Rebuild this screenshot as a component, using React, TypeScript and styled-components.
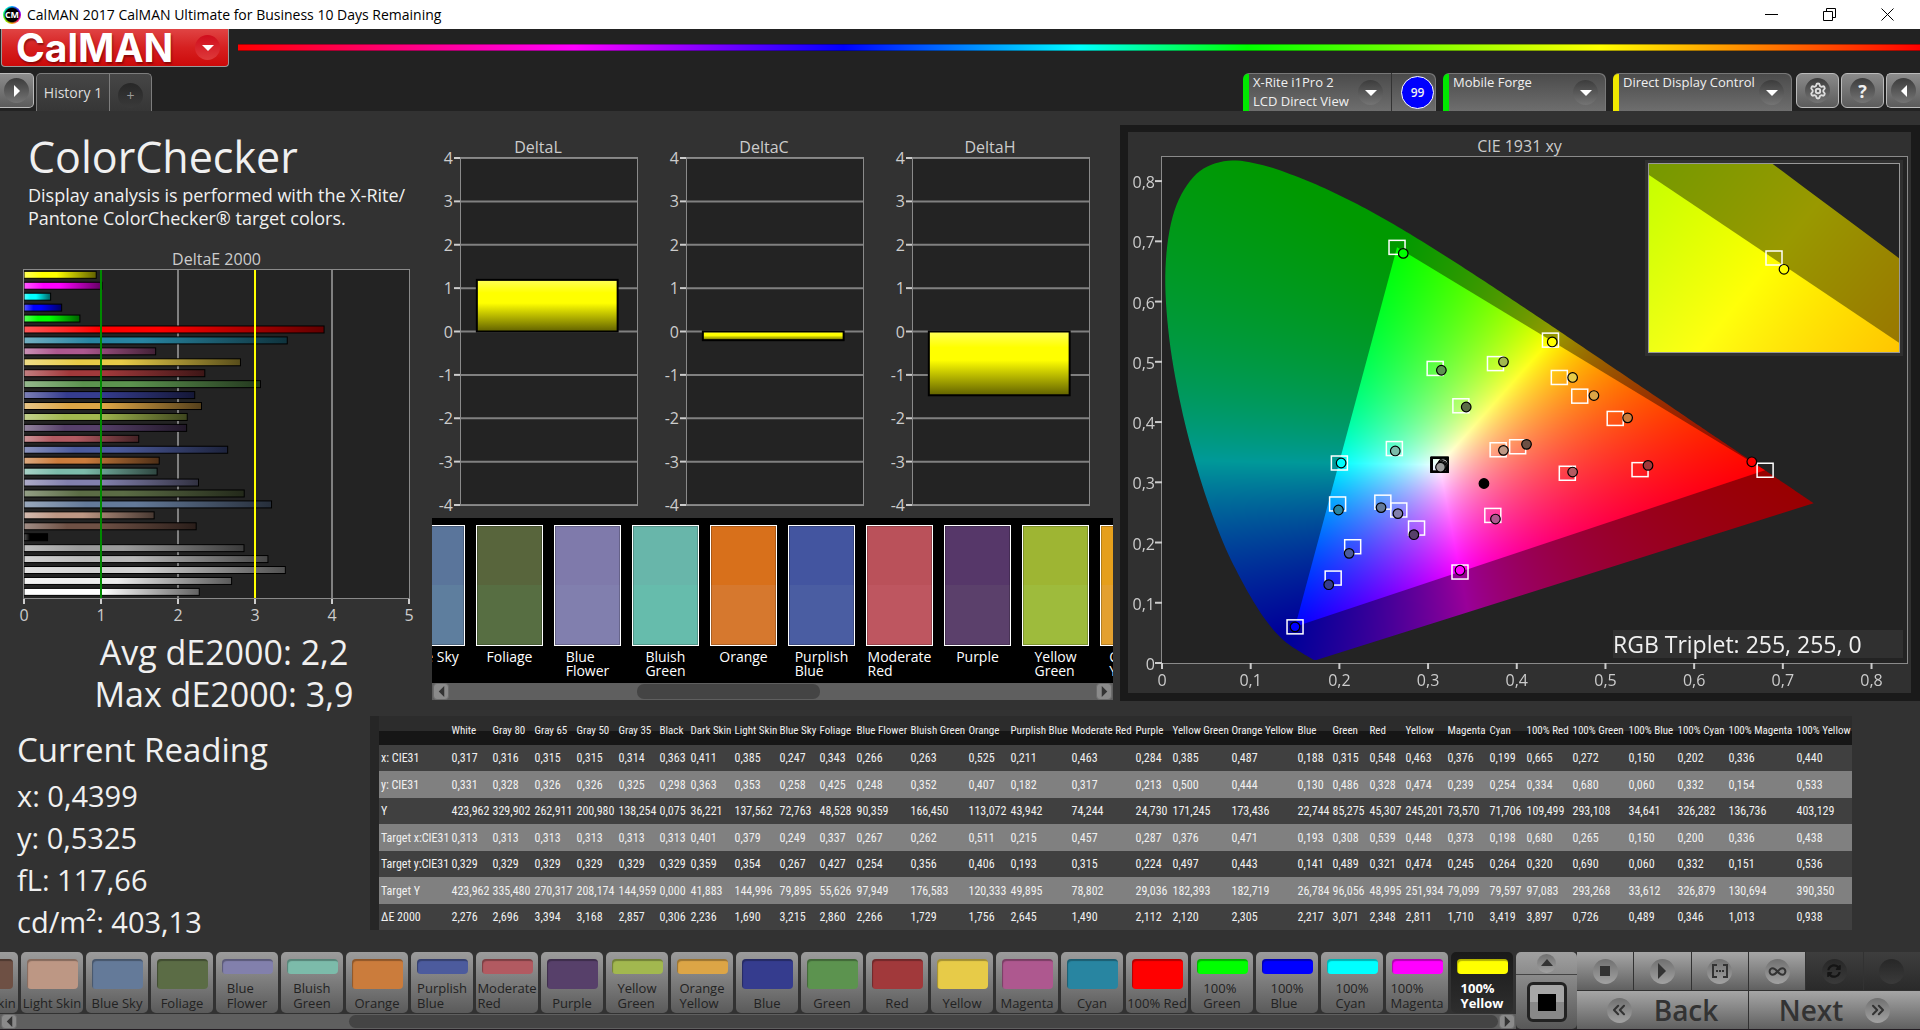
import React, { useId, useLayoutEffect, useRef } from "react";
import styled, { createGlobalStyle, css } from "styled-components";
import { ChevronsLeft, ChevronsRight, Infinity as InfinityIcon, Settings } from "lucide-react";
import { FaSyncAlt } from "react-icons/fa";

/* ---------- data ---------- */

type Patch = {
  name: string;
  lines?: string[];
  color: string;
  values: string[];
};

const rowLabels = ["x: CIE31", "y: CIE31", "Y", "Target x:CIE31", "Target y:CIE31", "Target Y", "ΔE 2000"];

const patch = (name: string, color: string, values: string, lines?: string[]): Patch => ({
  name,
  color,
  values: values.split(" "),
  lines,
});

const patches: Patch[] = [
  patch("White", "#ffffff", "0,317 0,331 423,962 0,313 0,329 423,962 2,276"),
  patch("Gray 80", "#ececec", "0,316 0,328 329,902 0,313 0,329 335,480 2,696"),
  patch("Gray 65", "#d2d2d2", "0,315 0,326 262,911 0,313 0,329 270,317 3,394"),
  patch("Gray 50", "#b9b9b9", "0,315 0,326 200,980 0,313 0,329 208,174 3,168"),
  patch("Gray 35", "#9b9b9b", "0,314 0,325 138,254 0,313 0,329 144,959 2,857"),
  patch("Black", "#000000", "0,363 0,298 0,075 0,313 0,329 0,000 0,306"),
  patch("Dark Skin", "#6e5044", "0,411 0,363 36,221 0,401 0,359 41,883 2,236"),
  patch("Light Skin", "#bd9784", "0,385 0,353 137,562 0,379 0,354 144,996 1,690"),
  patch("Blue Sky", "#647a99", "0,247 0,258 72,763 0,249 0,267 79,895 3,215"),
  patch("Foliage", "#5b6c45", "0,343 0,425 48,528 0,337 0,427 55,626 2,860"),
  patch("Blue Flower", "#8280ac", "0,266 0,248 90,359 0,267 0,254 97,949 2,266", ["Blue", "Flower"]),
  patch("Bluish Green", "#7cbbaa", "0,263 0,352 166,450 0,262 0,356 176,583 1,729", ["Bluish", "Green"]),
  patch("Orange", "#cb7c3c", "0,525 0,407 113,072 0,511 0,406 120,333 1,756"),
  patch("Purplish Blue", "#4c5b9d", "0,211 0,182 43,942 0,215 0,193 49,895 2,645", ["Purplish", "Blue"]),
  patch("Moderate Red", "#b25a61", "0,463 0,317 74,244 0,457 0,315 78,802 1,490", ["Moderate", "Red"]),
  patch("Purple", "#57406a", "0,284 0,213 24,730 0,287 0,224 29,036 2,112"),
  patch("Yellow Green", "#a2b84f", "0,385 0,500 171,245 0,376 0,497 182,393 2,120", ["Yellow", "Green"]),
  patch("Orange Yellow", "#dca546", "0,487 0,444 173,436 0,471 0,443 182,719 2,305", ["Orange", "Yellow"]),
  patch("Blue", "#353c8e", "0,188 0,130 22,744 0,193 0,141 26,784 2,217"),
  patch("Green", "#5c934f", "0,315 0,486 85,275 0,308 0,489 96,056 3,071"),
  patch("Red", "#a1393b", "0,548 0,328 45,307 0,539 0,321 48,995 2,348"),
  patch("Yellow", "#e7cb48", "0,463 0,474 245,201 0,448 0,474 251,934 2,811"),
  patch("Magenta", "#ae588f", "0,376 0,239 73,570 0,373 0,245 79,099 1,710"),
  patch("Cyan", "#2885a1", "0,199 0,254 71,706 0,198 0,264 79,597 3,419"),
  patch("100% Red", "#ff0000", "0,665 0,334 109,499 0,680 0,320 97,083 3,897"),
  patch("100% Green", "#00ff00", "0,272 0,680 293,108 0,265 0,690 293,268 0,726", ["100%", "Green"]),
  patch("100% Blue", "#0000ff", "0,150 0,060 34,641 0,150 0,060 33,612 0,489", ["100%", "Blue"]),
  patch("100% Cyan", "#00ffff", "0,202 0,332 326,282 0,200 0,332 326,879 0,346", ["100%", "Cyan"]),
  patch("100% Magenta", "#ff00ff", "0,336 0,154 136,736 0,336 0,151 130,694 1,013", ["100%", "Magenta"]),
  patch("100% Yellow", "#ffff00", "0,440 0,533 403,129 0,438 0,536 390,350 0,938", ["100%", "Yellow"]),
];

const columnWidths = [
  41, 42, 42, 42, 41, 31, 44, 45, 40, 37, 54, 58, 42, 61, 64, 37, 59, 66, 35, 37, 36, 42, 42, 37, 46, 56, 49, 51, 68, 57,
];

const swatches = [
  { lines: ["Blue Sky"], top: "#5a759b", bottom: "#5e7e9e" },
  { lines: ["Foliage"], top: "#58653c", bottom: "#576e42" },
  { lines: ["Blue", "Flower"], top: "#7f7aab", bottom: "#817fae" },
  { lines: ["Bluish", "Green"], top: "#68b6aa", bottom: "#66bcac" },
  { lines: ["Orange"], top: "#d8701b", bottom: "#d6782e" },
  { lines: ["Purplish", "Blue"], top: "#4355a0", bottom: "#4a5da2" },
  { lines: ["Moderate", "Red"], top: "#ba515a", bottom: "#be5660" },
  { lines: ["Purple"], top: "#563769", bottom: "#5b406b" },
  { lines: ["Yellow", "Green"], top: "#9eb533", bottom: "#9ebb3c" },
  { lines: ["Orange", "Yellow"], top: "#e59f1c", bottom: "#e3a02f" },
];

const num = (text: string) => parseFloat(text.replace(",", "."));

/* ---------- shared styles ---------- */

const GlobalStyle = createGlobalStyle`
  *, *::before, *::after { box-sizing: border-box; }
  body { margin: 0; background: #323232; }
  button { font: inherit; color: inherit; border: 0; margin: 0; padding: 0; background: none; }
  h1, h2, h3, p { margin: 0; font-weight: 400; }
`;

const sans = `"Open Sans", "Noto Sans", sans-serif`;

const Window = styled.div`
  min-height: 100vh;
  display: flex;
  flex-direction: column;
  overflow: hidden;
  font-family: ${sans};
  color: #f0f0f0;
  background: #323232;
`;

/* ---------- title bar ---------- */

const TitleBar = styled.header`
  height: 29px;
  display: flex;
  align-items: center;
  padding-left: 3px;
  background: #fff;
  color: #000;
  font-size: 14px;
`;

const AppIcon = styled.span`
  width: 18px;
  height: 18px;
  border-radius: 50%;
  display: grid;
  place-items: center;
  background: radial-gradient(circle, #000 52%, transparent 64%), conic-gradient(#0af, #50f, #f0a, #fa0, #6f0, #0fa, #0af);
  color: #fff;
  font-size: 9px;
  font-weight: 700;
`;

const WindowTitle = styled.span`
  flex: 1;
  padding-left: 6px;
`;

const WindowButton = styled.button`
  width: 58px;
  height: 29px;
  display: grid;
  place-items: center;
`;

const WindowButtons = styled.div`
  display: flex;
  padding-right: 4px;
`;

/* ---------- application header ---------- */

const AppHeader = styled.div`
  height: 82px;
  background: #222;
  display: flex;
  flex-direction: column;
  justify-content: space-between;
`;

const BrandRow = styled.div`
  display: flex;
  align-items: flex-start;
  gap: 9px;
  padding-left: 1px;
`;

const BrandButton = styled.button`
  width: 228px;
  height: 38px;
  padding: 0 8px 0 14px;
  display: flex;
  align-items: center;
  justify-content: space-between;
  border: 1px solid #999;
  border-top: 0;
  border-radius: 0 0 4px 4px;
  background: linear-gradient(#e04444, #d62020 50%, #cc0a0a);
  color: #fff;
  font-family: Inter, ${sans};
  font-size: 39px;
  line-height: 36px;
  font-weight: 700;
  text-shadow: 1px 2px 2px rgba(90, 0, 0, 0.6);
`;

const Knob = styled.span<{ $tone?: "red" | "dark" | "light" | "faint" }>`
  width: 25px;
  height: 25px;
  flex: none;
  border-radius: 50%;
  display: grid;
  place-items: center;
  ${({ $tone = "dark" }) =>
    ({
      red: css`background: linear-gradient(#d00c1c, #dd3a3a);`,
      dark: css`background: linear-gradient(#3c3c3c, #747474);`,
      light: css`background: linear-gradient(#707070, #a2a2a2);`,
      faint: css`background: linear-gradient(#272727, #3a3a3a);`,
    })[$tone]}
`;

const Spectrum = styled.div`
  flex: 1;
  height: 7px;
  margin-top: 15px;
  background: linear-gradient(90deg, #f00, #f0f 20%, #00f 36%, #0ff 50%, #0f0 60%, #ff0 81%, #f00);
  border-top: 1px solid rgba(0, 0, 0, 0.35);
  border-bottom: 1px solid rgba(0, 0, 0, 0.35);
`;

const TabRow = styled.div`
  height: 38px;
  display: flex;
  align-items: flex-start;
`;

const EdgeButton = styled.button<{ $side: "left" | "right" }>`
  width: 34px;
  height: 35px;
  display: grid;
  place-items: center;
  border: 1px solid #bbb;
  background: linear-gradient(#8c8c8c, #5c5c5c);
  ${({ $side }) => ($side === "left" ? css`border-left: 0; border-radius: 0 5px 5px 0;` : css`border-right: 0; border-radius: 5px 0 0 5px;`)}
`;

const HistoryTabs = styled.div`
  display: flex;
  margin-left: 2px;
  height: 38px;
  border: 1px solid #7d7d7d;
  border-bottom: 0;
  border-radius: 5px 5px 0 0;
  background: linear-gradient(#464646, #363636);
  color: #ddd;
  font-size: 14px;
`;

const HistoryTab = styled.button`
  width: 73px;
  border-right: 1px solid #7d7d7d;
`;

const AddTab = styled.button`
  width: 41px;
  padding-top: 6px;
  display: grid;
  place-items: center;
  color: #999;
`;

const Spacer = styled.div`
  flex: 1;
`;

const DeviceRow = styled.div`
  display: flex;
  gap: 7px;
`;

const DeviceTab = styled.div<{ $width: number; $accent: string }>`
  width: ${({ $width }) => $width}px;
  height: 38px;
  display: flex;
  overflow: hidden;
  border-radius: 6px 6px 0 0;
  box-shadow: inset -1px 1px 0 #777;
  background: linear-gradient(90deg, ${({ $accent }) => $accent} 6px, transparent 6px), linear-gradient(#4a4a4a, #6e6e6e);
`;

const DeviceButton = styled.button`
  flex: 1;
  display: flex;
  justify-content: space-between;
  padding: 0 8px 0 10px;
  text-align: left;
  font-size: 13px;
  line-height: 19px;
  white-space: nowrap;

  ${Knob} {
    margin-top: 7px;
  }
`;

const MeterBadgeButton = styled.button`
  width: 45px;
  padding-left: 7px;
  border-left: 1px solid #333;
  display: grid;
  place-items: center;
`;

const MeterBadge = styled.span`
  width: 33px;
  height: 33px;
  border: 1px solid #fff;
  border-radius: 50%;
  background: #0000fe;
  display: grid;
  place-items: center;
  font-size: 12px;
  font-weight: 600;
`;

const ToolRow = styled.div`
  display: flex;
  gap: 2px;
  margin-left: 4px;
`;

const ToolButton = styled.button`
  width: 43px;
  height: 35px;
  display: grid;
  place-items: center;
  border: 1px solid #bbb;
  border-radius: 6px;
  background: linear-gradient(#8a8a8a, #5c5c5c);
  font-size: 18px;
  font-weight: 700;
`;

/* ---------- main area ---------- */

const Workspace = styled.main`
  flex: 1;
  background: #323232;
`;

const Analysis = styled.div`
  display: grid;
  grid-template-columns: 432px minmax(0, 681fr) 7px minmax(0, 800fr);
`;

const Summary = styled.section`
  padding: 19px 0 0 24px;
`;

const PageTitle = styled.h1`
  padding-left: 4px;
  font-size: 43px;
  line-height: 54px;
`;

const Description = styled.p`
  padding-left: 4px;
  font-size: 18px;
  line-height: 23px;
  white-space: nowrap;
`;

const ChartTitle = styled.h3`
  font-size: 16px;
  line-height: 22px;
  color: #ccc;
  text-align: center;
`;

const DeltaEBlock = styled.div`
  width: 385px;
  padding-top: 18px;
`;

const Plot = styled.svg<{ $height: number }>`
  display: block;
  width: 100%;
  height: ${({ $height }) => $height}px;
  overflow: visible;
  background: #232323;
  outline: 1px solid #8a8a8a;
  font-size: 16px;
  font-family: ${sans};
`;

const Averages = styled.div`
  margin-top: 33px;
  width: 400px;
  text-align: center;
  font-size: 34px;
  line-height: 42px;
`;

const Middle = styled.section`
  padding-top: 25px;
`;

const DeltaRow = styled.div`
  display: grid;
  grid-template-columns: repeat(3, minmax(0, 1fr));
  column-gap: 50px;
  padding: 0 24px 0 29px;
`;

const DeltaTitle = styled(ChartTitle)`
  padding-right: 22px;
`;

const Carousel = styled.div`
  margin-top: 13px;
  height: 165px;
  overflow: hidden;
  background: #000;
`;

const CarouselTrack = styled.div`
  display: flex;
  gap: 11px;
  margin-left: -34px;
  padding-top: 7px;
`;

const SwatchCard = styled.div`
  flex: 0 0 67px;
  display: flex;
  flex-direction: column;
  align-items: center;
  font-size: 14px;
  line-height: 14px;
  color: #fff;
  white-space: nowrap;
`;

const Swatch = styled.div<{ $top: string; $bottom: string }>`
  width: 67px;
  height: 121px;
  margin-bottom: 4px;
  border: 1px solid #fff;
  background: linear-gradient(${({ $top }) => $top} 50%, ${({ $bottom }) => $bottom} 50%);
  box-shadow: inset 0 0 0 1px rgba(0, 0, 0, 0.2);
`;

const ScrollBar = styled.div<{ $height: number }>`
  height: ${({ $height }) => $height}px;
  display: flex;
  align-items: center;
  padding: 0 1px;
  background: #5f5f5f;
`;

const ScrollArrow = styled.button`
  width: 16px;
  height: 100%;
  display: grid;
  place-items: center;
  border: 1px solid #6c6c6c;
  border-radius: 4px;
  background: #8a8a8a;
`;

const ScrollTrack = styled.div`
  flex: 1;
  height: 100%;
  display: flex;
  padding: 1px 0;
`;

const ScrollThumb = styled.div<{ $size: number }>`
  flex: ${({ $size }) => $size};
  border-radius: 7px;
  background: #444;
`;

const ScrollGap = styled.div<{ $size: number }>`
  flex: ${({ $size }) => $size};
`;

const CiePanel = styled.section`
  grid-column: 4;
  margin-top: 14px;
  height: 576px;
  padding: 7px 9px 8px 8px;
  background: #1a1a1a;
`;

const CieInner = styled.div`
  height: 100%;
  padding: 3px 4px 0 34px;
  background: #303030;
`;

const CieTitle = styled(ChartTitle)`
  padding-right: 30px;
`;

const CiePlot = styled.div`
  position: relative;
  height: 506px;
  background: #232323;
  outline: 1px solid #8a8a8a;
`;

const GamutCanvas = styled.canvas`
  display: block;
  width: 100%;
  height: 100%;
`;

const CieOverlay = styled.svg`
  position: absolute;
  inset: 0;
  width: 100%;
  height: 100%;
  overflow: visible;
  font-size: 16px;
  font-family: ${sans};
`;

const Inset = styled.div`
  position: absolute;
  top: 3px;
  right: 4px;
  width: 258px;
  height: 196px;
  padding: 3px;
  background: #303030;
`;

const InsetPlot = styled.div`
  position: relative;
  height: 100%;
  border: 1px solid #999;
  background: #232323;
`;

const Triplet = styled.div`
  position: absolute;
  right: 4px;
  bottom: 5px;
  width: 290px;
  height: 28px;
  background: #303030;
  font-size: 23px;
  line-height: 28px;
`;

/* ---------- readings and table ---------- */

const Results = styled.div`
  display: grid;
  grid-template-columns: 370px minmax(0, 1fr);
  padding: 1px 69px 9px 0;
`;

const Readings = styled.section`
  padding: 13px 0 0 17px;
`;

const ReadingTitle = styled.h2`
  font-size: 33px;
  line-height: 42px;
  margin-bottom: 4px;
`;

const ReadingLine = styled.p`
  font-size: 29px;
  line-height: 42px;
`;

const DataTable = styled.table`
  width: 100%;
  table-layout: fixed;
  border-collapse: collapse;
  border-left: 9px solid #262626;
  font-family: "Roboto Condensed", "Liberation Sans Narrow", sans-serif;
  font-size: 12px;
  align-self: start;

  th, td {
    padding: 0 0 0 2px;
    text-align: left;
    font-weight: 400;
    white-space: nowrap;
  }

  thead tr {
    height: 29px;
    background: linear-gradient(#2c2c2c 50%, #161616 50%);
  }

  thead th {
    font-size: 11px;
  }

  tbody tr {
    height: 26px;
    background: #404040;
  }

  tbody tr:nth-child(even) {
    height: 27px;
    background: #808080;
  }
`;

/* ---------- footer ---------- */

const Footer = styled.footer`
  height: 78px;
  display: flex;
  border-bottom: 1px solid #221c22;
`;

const PatchArea = styled.div`
  flex: 1;
  min-width: 0;
  display: flex;
  flex-direction: column;
`;

const PatchStrip = styled.div`
  display: flex;
  justify-content: flex-end;
  gap: 3px;
  height: 62px;
  padding-right: 3px;
  overflow: hidden;
`;

const PatchButton = styled.button<{ $active: boolean }>`
  flex: 0 0 62px;
  height: 61px;
  padding: 7px 0 2px;
  display: flex;
  flex-direction: column;
  justify-content: space-between;
  align-items: center;
  border-radius: 5px;
  color: #222;
  font-size: 13px;
  font-weight: 500;
  line-height: 15px;
  white-space: nowrap;
  background: linear-gradient(#9c9c9c, #5a5a5a);
  ${({ $active }) =>
    $active &&
    css`
      color: #fff;
      font-weight: 700;
      background: linear-gradient(#1a1a1a, #2e2e2e);
    `}
`;

const PatchChip = styled.span<{ $color: string; $tall: boolean }>`
  width: 51px;
  height: ${({ $tall }) => ($tall ? 30 : 15)}px;
  border-radius: 4px;
  background: ${({ $color }) => $color};
  box-shadow: inset 1px 2px 1px rgba(0, 0, 0, 0.3);
`;

const PatchLabel = styled.span`
  text-align: left;
`;

const LevelColumn = styled.div`
  width: 61px;
  display: flex;
  flex-direction: column;
  border-radius: 5px;
  overflow: hidden;
  background: linear-gradient(#a0a0a0, #585858);
`;

const UpButton = styled.button`
  height: 23px;
  display: grid;
  place-items: center;
  border-bottom: 1px solid #444;

  ${Knob} {
    width: 19px;
    height: 19px;
  }
`;

const WindowPattern = styled.button`
  flex: 1;
  display: grid;
  place-items: center;
`;

const PatternIcon = styled.span`
  width: 40px;
  height: 40px;
  border: 3px solid #222;
  border-radius: 6px;
  display: grid;
  place-items: center;
  background: linear-gradient(#a6a6a6 50%, #888 50%);

  &::after {
    content: "";
    width: 18px;
    height: 17px;
    background: #000;
  }
`;

const Transport = styled.div`
  width: 343px;
  display: grid;
  grid-template-columns: repeat(6, 1fr);
  grid-template-rows: 38px 38px;
  gap: 1px;
`;

const TransportButton = styled.button<{ $off?: boolean }>`
  display: grid;
  place-items: center;
  color: #333;
  background: linear-gradient(#a6a6a6, #606060);
  ${({ $off }) => $off && css`background: linear-gradient(#3e3e3e, #2a2a2a);color: #151515;`}
`;

const NavButton = styled.button`
  grid-column: span 3;
  display: flex;
  align-items: center;
  justify-content: center;
  gap: 22px;
  color: #333;
  background: linear-gradient(#a6a6a6, #606060);
  font-size: 28px;
  font-weight: 600;
  line-height: 36px;
`;

/* ---------- drawings ---------- */

const Arrow = ({ dir, color = "#fff", size = 12 }: { dir: "up" | "down" | "left" | "right"; color?: string; size?: number }) => {
  const points = {
    up: "0,9 6,2 12,9",
    down: "0,3 12,3 6,9",
    left: "9,0 3,6 9,12",
    right: "3,0 9,6 3,12",
  }[dir];
  return (
    <svg width={size} height={size} viewBox="0 0 12 12" aria-hidden="true">
      <polygon points={points} fill={color} />
    </svg>
  );
};

const channels = (hex: string) => [1, 3, 5].map((i) => parseInt(hex.slice(i, i + 2), 16));
const lighten = (hex: string, t: number) => `rgb(${channels(hex).map((c) => Math.round(c + (255 - c) * t)).join()})`;
const darken = (hex: string, t: number) => `rgb(${channels(hex).map((c) => Math.round(c * t)).join()})`;

const Glossy = ({ id, color, vertical }: { id: string; color: string; vertical?: boolean }) => (
  <linearGradient id={id} x1="0" y1="0" x2={vertical ? 0 : 1} y2={vertical ? 1 : 0}>
    <stop offset="0" stopColor={lighten(color, 0.35)} />
    <stop offset="0.25" stopColor={color} />
    <stop offset="0.45" stopColor={color} />
    <stop offset="1" stopColor={darken(color, 0.38)} />
  </linearGradient>
);

const DeltaEChart = () => {
  const bars = [...patches].reverse();
  const uid = useId();
  return (
    <Plot $height={328} role="img" aria-label="DeltaE 2000">
      <defs>
        {bars.map((bar, i) => (
          <Glossy key={bar.name} id={`${uid}-${i}`} color={bar.color} />
        ))}
      </defs>
      {[1, 2, 3, 4].map((v) => (
        <line key={v} x1={`${v * 20}%`} x2={`${v * 20}%`} y1="0" y2="100%" stroke="#808080" strokeWidth="2" />
      ))}
      {bars.map((bar, i) => (
        <rect
          key={bar.name}
          x="0"
          y={`${(i + 0.12) * (100 / 30)}%`}
          width={`${num(bar.values[6]) * 20}%`}
          height="7"
          fill={`url(#${uid}-${i})`}
          stroke="#000"
        />
      ))}
      <line x1="20%" x2="20%" y1="0" y2="100%" stroke="#008a00" strokeWidth="2" />
      <line x1="60%" x2="60%" y1="0" y2="100%" stroke="#ffff00" strokeWidth="2" />
      {[0, 1, 2, 3, 4, 5].map((v) => (
        <svg key={v} x={`${v * 20}%`} y="100%" overflow="visible">
          <line y2="6" stroke="#ccc" strokeWidth="2" />
          <text y="23" textAnchor="middle" fill="#ccc">
            {v}
          </text>
        </svg>
      ))}
    </Plot>
  );
};

const DeltaChart = ({ title, value }: { title: string; value: number }) => {
  const id = useId();
  const at = (v: number) => ((4 - v) / 8) * 100;
  return (
    <div>
      <DeltaTitle>{title}</DeltaTitle>
      <Plot $height={347} role="img" aria-label={title}>
        <defs>
          <Glossy id={id} color="#ffff00" vertical />
        </defs>
        {[4, 3, 2, 1, 0, -1, -2, -3, -4].map((v) => (
          <svg key={v} y={`${at(v)}%`} overflow="visible">
            <line x2="100%" stroke="#808080" strokeWidth="2" />
            <line x1="-7" x2="0" stroke="#ccc" strokeWidth="2" />
            <text x="-8" y="6" textAnchor="end" fill="#ccc">
              {v}
            </text>
          </svg>
        ))}
        <rect
          x="9%"
          width="80%"
          y={`${at(Math.max(0, value))}%`}
          height={`${Math.abs(value) * 12.5}%`}
          fill={`url(#${id})`}
          stroke="#000"
          strokeWidth="2"
        />
      </Plot>
    </div>
  );
};

/* CIE 1931 spectral locus, 380 nm to 700 nm */
const locus: [number, number][] = [
  [0.1741, 0.005], [0.1733, 0.0048], [0.1714, 0.0051], [0.1689, 0.0069], [0.1644, 0.0109], [0.1566, 0.0177],
  [0.144, 0.0297], [0.1355, 0.0399], [0.1241, 0.0578], [0.1096, 0.0868], [0.0913, 0.1327], [0.0687, 0.2007],
  [0.0454, 0.295], [0.0235, 0.4127], [0.0082, 0.5384], [0.0039, 0.6548], [0.0139, 0.7502], [0.0389, 0.812],
  [0.0743, 0.8338], [0.1142, 0.8262], [0.1547, 0.8059], [0.1929, 0.7816], [0.2296, 0.7543], [0.2658, 0.7243],
  [0.3016, 0.6923], [0.3373, 0.6589], [0.3731, 0.6245], [0.4087, 0.5896], [0.4441, 0.5547], [0.4788, 0.5202],
  [0.5125, 0.4866], [0.5448, 0.4544], [0.5752, 0.4242], [0.6029, 0.3965], [0.627, 0.3725], [0.6482, 0.3514],
  [0.6658, 0.334], [0.6801, 0.3197], [0.6915, 0.3083], [0.7079, 0.292], [0.719, 0.2809], [0.73, 0.27], [0.7347, 0.2653],
];

const primaries: [number, number][] = [[0.68, 0.32], [0.265, 0.69], [0.15, 0.06]];
const whitePoint: [number, number] = [0.3127, 0.329];

const toXYZ = ([x, y]: [number, number]) => [x / y, 1, (1 - x - y) / y];

const invert = (m: number[][]) => {
  const [[a, b, c], [d, e, f], [g, h, i]] = m;
  const det = a * (e * i - f * h) - b * (d * i - f * g) + c * (d * h - e * g);
  return [
    [(e * i - f * h) / det, (c * h - b * i) / det, (b * f - c * e) / det],
    [(f * g - d * i) / det, (a * i - c * g) / det, (c * d - a * f) / det],
    [(d * h - e * g) / det, (b * g - a * h) / det, (a * e - b * d) / det],
  ];
};

const apply = (m: number[][], v: number[]) => m.map((r) => r[0] * v[0] + r[1] * v[1] + r[2] * v[2]);

const primaryXYZ = primaries.map(toXYZ);
const columns = [0, 1, 2].map((r) => primaryXYZ.map((p) => p[r]));
const scale = apply(invert(columns), toXYZ(whitePoint));
const xyzToRgb = invert(columns.map((r) => r.map((v, i) => v * scale[i])));

type Range = { x0: number; x1: number; y0: number; y1: number };

const paintGamut = (canvas: HTMLCanvasElement, { x0, x1, y0, y1 }: Range) => {
  const { width, height } = canvas;
  const ctx = canvas.getContext("2d");
  if (!ctx) return;
  const layer = (level: number) => {
    const buffer = document.createElement("canvas");
    buffer.width = width;
    buffer.height = height;
    const bctx = buffer.getContext("2d")!;
    const image = bctx.createImageData(width, height);
    for (let py = 0; py < height; py++) {
      const y = y1 - ((py + 0.5) / height) * (y1 - y0);
      for (let px = 0; px < width; px++) {
        const x = x0 + ((px + 0.5) / width) * (x1 - x0);
        const rgb = apply(xyzToRgb, [x, y, 1 - x - y]).map((v) => Math.max(0, v));
        const peak = Math.max(...rgb) || 1;
        const o = (py * width + px) * 4;
        for (let k = 0; k < 3; k++) image.data[o + k] = (rgb[k] / peak) * 255 * level;
        image.data[o + 3] = 255;
      }
    }
    bctx.putImageData(image, 0, 0);
    return buffer;
  };
  const fill = (outline: [number, number][], level: number) => {
    ctx.save();
    ctx.beginPath();
    outline.forEach(([x, y]) => ctx.lineTo(((x - x0) / (x1 - x0)) * width, ((y1 - y) / (y1 - y0)) * height));
    ctx.closePath();
    ctx.clip();
    ctx.drawImage(layer(level), 0, 0);
    ctx.restore();
  };
  ctx.clearRect(0, 0, width, height);
  fill(smooth(locus), 0.6);
  fill(primaries, 1);
};

/* Catmull-Rom subdivision of the locus samples */
const smooth = (pts: [number, number][]) => {
  const out: [number, number][] = [];
  for (let i = 0; i < pts.length - 1; i++) {
    const p = [pts[Math.max(0, i - 1)], pts[i], pts[i + 1], pts[Math.min(pts.length - 1, i + 2)]];
    for (let s = 0; s < 8; s++) {
      const t = s / 8;
      out.push(
        [0, 1].map(
          (k) =>
            0.5 *
            (2 * p[1][k] +
              (p[2][k] - p[0][k]) * t +
              (2 * p[0][k] - 5 * p[1][k] + 4 * p[2][k] - p[3][k]) * t * t +
              (3 * p[1][k] - p[0][k] - 3 * p[2][k] + p[3][k]) * t * t * t),
        ) as [number, number],
      );
    }
  }
  out.push(pts[pts.length - 1]);
  return out;
};

const Gamut = ({ range, width, height }: { range: Range; width: number; height: number }) => {
  const ref = useRef<HTMLCanvasElement>(null);
  useLayoutEffect(() => {
    if (ref.current) paintGamut(ref.current, range);
  }, [range]);
  return <GamutCanvas ref={ref} width={width} height={height} />;
};

const mainRange: Range = { x0: 0, x1: 0.84, y0: 0, y1: 0.84 };
const insetRange: Range = { x0: 0.413, x1: 0.463, y0: 0.511, y1: 0.561 };

const Markers = ({ range, list }: { range: Range; list: Patch[] }) => {
  const px = (x: number) => `${((x - range.x0) / (range.x1 - range.x0)) * 100}%`;
  const py = (y: number) => `${((range.y1 - y) / (range.y1 - range.y0)) * 100}%`;
  return (
    <>
      {list.map((p) => {
        const neutral = p.values[3] === "0,313";
        return (
          <svg key={p.name} x={px(num(p.values[3]))} y={py(num(p.values[4]))} overflow="visible">
            <rect x="-8" y="-7" width="16" height="14" fill="none" stroke={neutral ? "#000" : "#fff"} strokeWidth={neutral ? 2 : 1.5} />
          </svg>
        );
      })}
      {list.map((p) => (
        <svg key={p.name} x={px(num(p.values[0]))} y={py(num(p.values[1]))} overflow="visible">
          <circle r="4.8" fill={p.color} stroke="#000" strokeWidth="1.2" />
        </svg>
      ))}
    </>
  );
};

const comma = (v: number) => (v === 0 ? "0" : `0,${v}`);

const CieChart = () => (
  <CiePlot>
    <Gamut range={mainRange} width={745} height={506} />
    <CieOverlay role="img" aria-label="CIE 1931 xy">
      {[0, 1, 2, 3, 4, 5, 6, 7, 8].map((v) => (
        <React.Fragment key={v}>
          <svg x={`${(v / 8.4) * 100}%`} y="100%" overflow="visible">
            <line y2="6" stroke="#ccc" strokeWidth="2" />
            <text y="23" textAnchor="middle" fill="#ccc">
              {comma(v)}
            </text>
          </svg>
          <svg y={`${100 - (v / 8.4) * 100}%`} overflow="visible">
            <line x1="-7" x2="0" stroke="#ccc" strokeWidth="2" />
            <text x="-7" y="7" textAnchor="end" fill="#ccc">
              {comma(v)}
            </text>
          </svg>
        </React.Fragment>
      ))}
      <Markers range={mainRange} list={patches} />
    </CieOverlay>
    <Inset>
      <InsetPlot>
        <Gamut range={insetRange} width={250} height={188} />
        <CieOverlay>
          <Markers range={insetRange} list={patches.slice(-1)} />
        </CieOverlay>
      </InsetPlot>
    </Inset>
    <Triplet>RGB Triplet: 255, 255, 0</Triplet>
  </CiePlot>
);

const Scroller = ({ height, before, size, after, label }: { height: number; before: number; size: number; after: number; label: string }) => (
  <ScrollBar $height={height}>
    <ScrollArrow aria-label={`${label} left`}>
      <Arrow dir="left" color="#333" size={11} />
    </ScrollArrow>
    <ScrollTrack>
      <ScrollGap $size={before} />
      <ScrollThumb $size={size} />
      <ScrollGap $size={after} />
    </ScrollTrack>
    <ScrollArrow aria-label={`${label} right`}>
      <Arrow dir="right" color="#333" size={11} />
    </ScrollArrow>
  </ScrollBar>
);

/* ---------- page ---------- */

export default function App() {
  return (
    <Window>
      <GlobalStyle />
      <TitleBar>
        <AppIcon>CM</AppIcon>
        <WindowTitle>CalMAN 2017 CalMAN Ultimate for Business 10 Days Remaining</WindowTitle>
        <WindowButtons>
          <WindowButton aria-label="Minimize">
            <svg width="13" height="13" stroke="#000" fill="none"><path d="M0 6.5h13" /></svg>
          </WindowButton>
          <WindowButton aria-label="Restore">
            <svg width="13" height="13" stroke="#000" fill="none"><path d="M.5 3.5h9v9h-9zM3.500 3.500v-3h9v9h-3" /></svg>
          </WindowButton>
          <WindowButton aria-label="Close">
            <svg width="13" height="13" stroke="#000" fill="none"><path d="M.5.5l12 12M12.500.5l-12 12" /></svg>
          </WindowButton>
        </WindowButtons>
      </TitleBar>

      <AppHeader>
        <BrandRow>
          <BrandButton aria-haspopup="menu">
            CalMAN
            <Knob $tone="red">
              <Arrow dir="down" />
            </Knob>
          </BrandButton>
          <Spectrum />
        </BrandRow>
        <TabRow>
          <EdgeButton $side="left" aria-label="Expand left panel">
            <Knob><Arrow dir="right" /></Knob>
          </EdgeButton>
          <HistoryTabs>
            <HistoryTab>History 1</HistoryTab>
            <AddTab aria-label="Add history">
              <Knob $tone="faint">+</Knob>
            </AddTab>
          </HistoryTabs>
          <Spacer />
          <DeviceRow>
            <DeviceTab $width={193} $accent="#00e800">
              <DeviceButton aria-haspopup="menu">
                <span>X-Rite i1Pro 2<br />LCD Direct View</span>
                <Knob><Arrow dir="down" /></Knob>
              </DeviceButton>
              <MeterBadgeButton aria-label="Meter readings">
                <MeterBadge>99</MeterBadge>
              </MeterBadgeButton>
            </DeviceTab>
            <DeviceTab $width={163} $accent="#00e800">
              <DeviceButton aria-haspopup="menu">
                <span>Mobile Forge</span>
                <Knob><Arrow dir="down" /></Knob>
              </DeviceButton>
            </DeviceTab>
            <DeviceTab $width={179} $accent="#f0e800">
              <DeviceButton aria-haspopup="menu">
                <span>Direct Display Control</span>
                <Knob><Arrow dir="down" /></Knob>
              </DeviceButton>
            </DeviceTab>
          </DeviceRow>
          <ToolRow>
            <ToolButton aria-label="Settings">
              <Knob><Settings size={18} color="#ddd" strokeWidth={2.5} /></Knob>
            </ToolButton>
            <ToolButton aria-label="Help">
              <Knob>?</Knob>
            </ToolButton>
            <EdgeButton $side="right" aria-label="Expand right panel">
              <Knob><Arrow dir="left" /></Knob>
            </EdgeButton>
          </ToolRow>
        </TabRow>
      </AppHeader>

      <Workspace>
        <Analysis>
          <Summary>
            <PageTitle>ColorChecker</PageTitle>
            <Description>
              Display analysis is performed with the X-Rite/
              <br />
              Pantone ColorChecker® target colors.
            </Description>
            <DeltaEBlock>
              <ChartTitle>DeltaE 2000</ChartTitle>
              <DeltaEChart />
            </DeltaEBlock>
            <Averages>
              <p>Avg dE2000: 2,2</p>
              <p>Max dE2000: 3,9</p>
            </Averages>
          </Summary>

          <Middle>
            <DeltaRow>
              <DeltaChart title="DeltaL" value={1.19} />
              <DeltaChart title="DeltaC" value={-0.2} />
              <DeltaChart title="DeltaH" value={-1.47} />
            </DeltaRow>
            <Carousel>
              <CarouselTrack>
                {swatches.map((s) => (
                  <SwatchCard key={s.lines.join(" ")}>
                    <Swatch $top={s.top} $bottom={s.bottom} />
                    <div>
                      {s.lines.map((line) => (
                        <div key={line}>{line}</div>
                      ))}
                    </div>
                  </SwatchCard>
                ))}
              </CarouselTrack>
            </Carousel>
            <Scroller height={17} before={188} size={183} after={276} label="Scroll swatches" />
          </Middle>

          <CiePanel>
            <CieInner>
              <CieTitle>CIE 1931 xy</CieTitle>
              <CieChart />
            </CieInner>
          </CiePanel>
        </Analysis>

        <Results>
          <Readings>
            <ReadingTitle>Current Reading</ReadingTitle>
            <ReadingLine>x: 0,4399</ReadingLine>
            <ReadingLine>y: 0,5325</ReadingLine>
            <ReadingLine>fL: 117,66</ReadingLine>
            <ReadingLine>cd/m²: 403,13</ReadingLine>
          </Readings>
          <DataTable>
            <colgroup>
              <col width={75} />
              {columnWidths.map((w, i) => (
                <col key={i} width={w} />
              ))}
            </colgroup>
            <thead>
              <tr>
                <th aria-label="Measurement" />
                {patches.map((p) => (
                  <th key={p.name} scope="col">{p.name}</th>
                ))}
              </tr>
            </thead>
            <tbody>
              {rowLabels.map((label, r) => (
                <tr key={label}>
                  <th scope="row">{label}</th>
                  {patches.map((p) => (
                    <td key={p.name}>{p.values[r]}</td>
                  ))}
                </tr>
              ))}
            </tbody>
          </DataTable>
        </Results>
      </Workspace>

      <Footer>
        <PatchArea>
          <PatchStrip>
            {patches.slice(6).map((p) => (
              <PatchButton key={p.name} $active={p.name === "100% Yellow"}>
                <PatchChip $color={p.color} $tall={!p.lines} />
                <PatchLabel>
                  {(p.lines ?? [p.name]).map((line, i) => (
                    <React.Fragment key={line}>
                      {i > 0 && <br />}
                      {line}
                    </React.Fragment>
                  ))}
                </PatchLabel>
              </PatchButton>
            ))}
          </PatchStrip>
          <Scroller height={15} before={332} size={1150} after={1} label="Scroll patches" />
        </PatchArea>
        <LevelColumn>
          <UpButton aria-label="Show more patterns">
            <Knob $tone="light"><Arrow dir="up" color="#333" /></Knob>
          </UpButton>
          <WindowPattern aria-label="Window pattern">
            <PatternIcon />
          </WindowPattern>
        </LevelColumn>
        <Transport>
          <TransportButton aria-label="Stop">
            <Knob $tone="light"><svg width="10" height="10"><rect width="10" height="10" fill="#333" /></svg></Knob>
          </TransportButton>
          <TransportButton aria-label="Play">
            <Knob $tone="light"><Arrow dir="right" color="#333" size={16} /></Knob>
          </TransportButton>
          <TransportButton aria-label="Read series">
            <Knob $tone="light">
              <svg width="16" height="14" fill="none" stroke="#333" strokeWidth="2">
                <path d="M5 1H1v12h4M11 1h4v12h-4M4 7h2M7 7h2M10 7h2" />
              </svg>
            </Knob>
          </TransportButton>
          <TransportButton aria-label="Continuous">
            <Knob $tone="light"><InfinityIcon size={19} strokeWidth={2.5} /></Knob>
          </TransportButton>
          <TransportButton $off aria-label="Refresh">
            <Knob $tone="faint"><FaSyncAlt size={14} /></Knob>
          </TransportButton>
          <TransportButton $off aria-label="Record">
            <Knob $tone="faint" />
          </TransportButton>
          <NavButton>
            <Knob $tone="light"><ChevronsLeft size={20} strokeWidth={2.5} /></Knob>
            Back
          </NavButton>
          <NavButton>
            Next
            <Knob $tone="light"><ChevronsRight size={20} strokeWidth={2.5} /></Knob>
          </NavButton>
        </Transport>
      </Footer>
    </Window>
  );
}
